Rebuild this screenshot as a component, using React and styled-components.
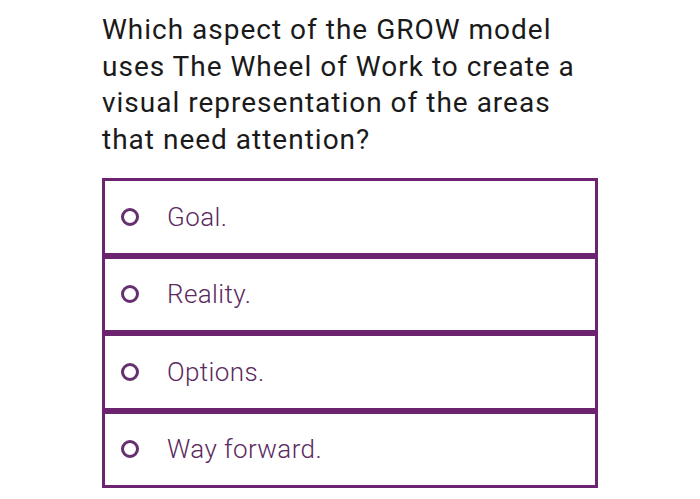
import React from "react";
import styled, { createGlobalStyle } from "styled-components";

const GlobalStyle = createGlobalStyle`
  body {
    margin: 0;
    background: #ffffff;
    font-family: Roboto, "Noto Sans", sans-serif;
  }
`;

const Page = styled.div`
  width: 700px;
  height: 499px;
  padding: 12px 0 0 102px;
  box-sizing: border-box;
  overflow: hidden;
`;

const Question = styled.h1`
  margin: 0 0 20px;
  width: 496px;
  font-size: 28px;
  font-weight: 400;
  line-height: 36.5px;
  letter-spacing: 1px;
  color: #1a1a1a;
`;

const Options = styled.div`
  display: flex;
  flex-direction: column;
  width: 496px;
`;

const Option = styled.label`
  display: flex;
  align-items: center;
  gap: 28px;
  height: 77.5px;
  box-sizing: border-box;
  padding-left: 16px;
  border: 3px solid #6c2470;
  cursor: pointer;
`;

const Radio = styled.span`
  width: 18px;
  height: 18px;
  box-sizing: border-box;
  border: 3.5px solid #663070;
  border-radius: 50%;
  flex-shrink: 0;
`;

const OptionText = styled.span`
  font-size: 26px;
  font-weight: 300;
  color: #5b2a5f;
  letter-spacing: 0.4px;
`;

const answers = ["Goal.", "Reality.", "Options.", "Way forward."];

const App = () => {
  return (
    <Page>
      <GlobalStyle />
      <Question>
        Which aspect of the GROW model uses The Wheel of Work to create a
        visual representation of the areas that need attention?
      </Question>
      <Options>
        {answers.map((a) => (
          <Option key={a}>
            <Radio />
            <OptionText>{a}</OptionText>
          </Option>
        ))}
      </Options>
    </Page>
  );
};

export default App;
